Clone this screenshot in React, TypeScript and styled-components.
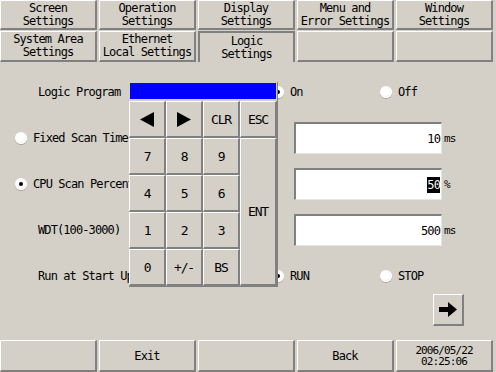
import React from 'react';
import styled, { createGlobalStyle, css } from 'styled-components';

const GlobalStyle = createGlobalStyle`
  html, body {
    margin: 0;
    padding: 0;
    background: #d4d0c8;
  }
  body {
    font-family: "DejaVu Sans Mono", "Liberation Mono", monospace;
    font-size: 12px;
    letter-spacing: -0.9px;
    color: #000;
  }
`;

const tabs = [
  ['Screen\nSettings', 'Operation\nSettings', 'Display\nSettings', 'Menu and\nError Settings', 'Window\nSettings'],
  ['System Area\nSettings', 'Ethernet\nLocal Settings', 'Logic\nSettings', '', ''],
];

const keys = ['left', 'right', 'CLR', 'ESC', '7', '8', '9', 'ENT', '4', '5', '6', '1', '2', '3', '0', '+/-', 'BS'];

const raised = css`
  background: #d4d0c8;
  border-top: 1px solid #ffffff;
  border-left: 1px solid #ffffff;
  border-right: 2px solid #808080;
  border-bottom: 2px solid #808080;
  box-sizing: border-box;
`;

const Triangle = ({ dir }: { dir: 'left' | 'right' }) => (
  <svg width="14" height="15" viewBox="0 0 14 15">
    <polygon points={dir === 'left' ? '14,0 14,15 0,7.5' : '0,0 0,15 14,7.5'} fill="#000" />
  </svg>
);

const Radio = ({ checked }: { checked?: boolean }) => (
  <RadioCircle>{checked && <RadioDot />}</RadioCircle>
);

const App = () => {
  return (
    <>
      <GlobalStyle />
      <Screen>
        <TabArea>
          {tabs.map((row, i) => (
            <TabRow key={i}>
              {row.map((label, j) => (
                <Tab key={j} $active={label.startsWith('Logic')}>{label}</Tab>
              ))}
            </TabRow>
          ))}
        </TabArea>

        <Content>
          <Row>
            <LeftCell $width={272} $indent={38}>Logic Program</LeftCell>
            <Option $width={108}><Radio checked />On</Option>
            <Option><Radio />Off</Option>
          </Row>
          <Row>
            <LeftCell $width={294} $indent={15}><Radio />Fixed Scan Time</LeftCell>
            <InputBox>10</InputBox>
            <Unit>ms</Unit>
          </Row>
          <Row>
            <LeftCell $width={294} $indent={15}><Radio checked />CPU Scan Percent</LeftCell>
            <InputBox><Selected>50</Selected></InputBox>
            <Unit>%</Unit>
          </Row>
          <Row>
            <LeftCell $width={294} $indent={38}>WDT(100-3000)</LeftCell>
            <InputBox>500</InputBox>
            <Unit>ms</Unit>
          </Row>
          <Row>
            <LeftCell $width={272} $indent={38}>Run at Start Up</LeftCell>
            <Option $width={108}><Radio checked />RUN</Option>
            <Option><Radio />STOP</Option>
          </Row>
          <ArrowRow>
            <ArrowButton>
              <svg width="18" height="15" viewBox="0 0 18 15">
                <polygon points="0,5 9,5 9,0 18,7.5 9,15 9,10 0,10" fill="#000" />
              </svg>
            </ArrowButton>
          </ArrowRow>

          <Keypad>
            <KeypadTitle />
            <KeyGrid>
              {keys.map((k) => (
                <Key key={k} $tall={k === 'ENT'}>
                  {k === 'left' || k === 'right' ? <Triangle dir={k} /> : k}
                </Key>
              ))}
            </KeyGrid>
          </Keypad>
        </Content>

        <BottomBar>
          <BarButton />
          <BarButton>Exit</BarButton>
          <BarButton />
          <BarButton>Back</BarButton>
          <BarButton $small>{'2006/05/22\n02:25:06'}</BarButton>
        </BottomBar>
      </Screen>
    </>
  );
};

export default App;

const Screen = styled.div`
  width: 496px;
  height: 372px;
  display: flex;
  flex-direction: column;
  overflow: hidden;
`;

const TabArea = styled.div`
  display: flex;
  flex-direction: column;
  gap: 1px;
`;

const TabRow = styled.div`
  display: grid;
  grid-template-columns: repeat(5, 97px);
  gap: 2px;
  height: 30px;
`;

const Tab = styled.div<{ $active?: boolean }>`
  ${raised};
  display: flex;
  align-items: center;
  justify-content: center;
  text-align: center;
  white-space: pre;
  line-height: 13px;
  ${({ $active }) => $active && css`
    border: 2px solid #808080;
    border-bottom: none;
    height: 31px;
  `}
`;

const Content = styled.div`
  position: relative;
  flex: 1;
  padding-top: 8px;
  box-sizing: border-box;
`;

const Row = styled.div`
  display: flex;
  align-items: center;
  height: 46px;
  white-space: nowrap;
`;

const LeftCell = styled.div<{ $width: number; $indent: number }>`
  width: ${({ $width }) => $width}px;
  padding-left: ${({ $indent }) => $indent}px;
  box-sizing: border-box;
  display: flex;
  align-items: center;
  gap: 6px;
`;

const Option = styled.div<{ $width?: number }>`
  width: ${({ $width }) => ($width ? `${$width}px` : 'auto')};
  display: flex;
  align-items: center;
  gap: 6px;
`;

const RadioCircle = styled.span`
  width: 12px;
  height: 12px;
  border-radius: 50%;
  background: radial-gradient(circle at 40% 40%, #ffffff 45%, #e8e6e2 70%, #b8b4ac 100%);
  box-shadow: inset -1px -1px 0 #ffffff, 0 1px 0 #a8a49c;
  display: flex;
  align-items: center;
  justify-content: center;
  flex-shrink: 0;
`;

const RadioDot = styled.span`
  width: 4px;
  height: 4px;
  border-radius: 50%;
  background: #000;
`;

const InputBox = styled.div`
  width: 148px;
  height: 32px;
  box-sizing: border-box;
  background: #ffffff;
  border-top: 2px solid #808080;
  border-left: 2px solid #808080;
  border-right: 1px solid #e8e6e2;
  border-bottom: 1px solid #e8e6e2;
  display: flex;
  align-items: center;
  justify-content: flex-end;
  padding-right: 1px;
`;

const Selected = styled.span`
  background: #000;
  color: #fff;
  padding: 1px 0;
`;

const Unit = styled.span`
  margin-left: 2px;
  font-size: 11px;
`;

const ArrowRow = styled.div`
  display: flex;
  justify-content: flex-end;
  padding-right: 32px;
  margin-top: -5px;
`;

const ArrowButton = styled.div`
  ${raised};
  width: 31px;
  height: 32px;
  display: flex;
  align-items: center;
  justify-content: center;
`;

const Keypad = styled.div`
  position: absolute;
  left: 129px;
  top: 21px;
  width: 149px;
  background: #d4d0c8;
  border-right: 1px solid #808080;
  border-bottom: 1px solid #808080;
  box-sizing: border-box;
  padding-top: 1px;
  display: flex;
  flex-direction: column;
  gap: 2px;
`;

const KeypadTitle = styled.div`
  height: 16px;
  margin: 0 1px;
  background: #0000ff;
`;

const KeyGrid = styled.div`
  display: grid;
  grid-template-columns: repeat(4, 1fr);
  grid-template-rows: repeat(5, 37px);
`;

const Key = styled.div<{ $tall?: boolean }>`
  ${raised};
  display: flex;
  align-items: center;
  justify-content: center;
  font-size: 13px;
  letter-spacing: -1.2px;
  ${({ $tall }) => $tall && css`
    grid-row: span 4;
  `}
`;

const BottomBar = styled.div`
  display: grid;
  grid-template-columns: repeat(5, 97px);
  gap: 2px;
  height: 32px;
`;

const BarButton = styled.div<{ $small?: boolean }>`
  ${raised};
  display: flex;
  align-items: center;
  justify-content: center;
  text-align: center;
  white-space: pre;
  line-height: ${({ $small }) => ($small ? '11px' : '14px')};
  font-size: ${({ $small }) => ($small ? '11px' : '12px')};
`;
